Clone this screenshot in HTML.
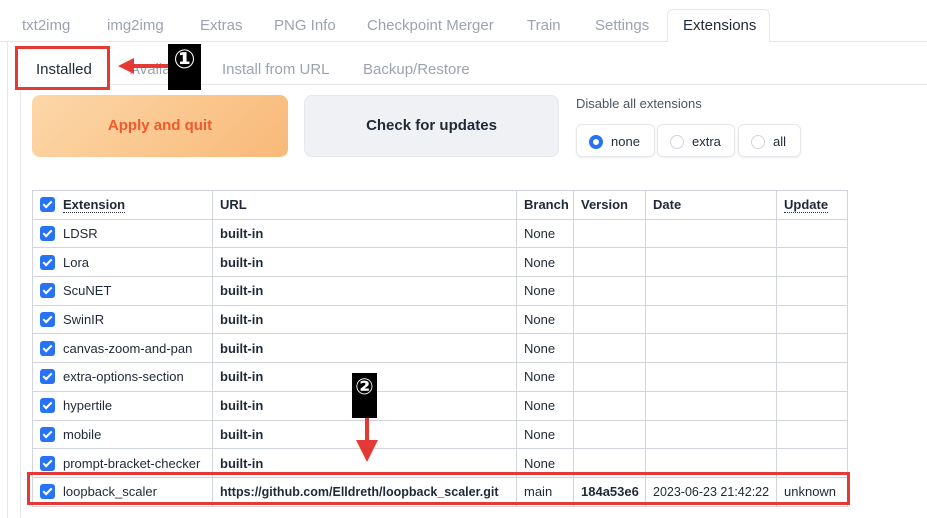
<!DOCTYPE html><html><head><style>
body{margin:0;width:927px;height:518px;background:#fff;font-family:"Liberation Sans",sans-serif;position:relative;overflow:hidden;color:#1f2937}
.a{position:absolute}
.tab{position:absolute;top:17px;font-size:15px;color:#9ca3af}
.st{position:absolute;top:61px;font-size:15px;color:#9ca3af}
table{position:absolute;left:32px;top:190px;border-collapse:collapse;font-size:13px;table-layout:fixed;width:815px}
tr{height:28.7px}
td{border:1px solid #d1d5db;padding:0 0 0 7px;box-sizing:border-box;white-space:nowrap;overflow:hidden}
.cb{display:inline-block;width:15px;height:15px;background:#2673f5;border-radius:3px;vertical-align:-3px;margin-right:8px;position:relative}
.cb:after{content:"";position:absolute;left:5px;top:2px;width:3px;height:7px;border:solid #fff;border-width:0 2px 2px 0;transform:rotate(45deg)}
b{font-weight:bold}
.u{border-bottom:1px dotted #333}
.rad{position:absolute;top:124px;height:33px;border:1px solid #e5e7eb;border-radius:6px;box-shadow:0 1px 2px rgba(0,0,0,.08);font-size:13px;line-height:33px;box-sizing:border-box}
.rc{display:inline-block;width:14px;height:14px;border:1px solid #d1d5db;border-radius:50%;vertical-align:-3px;margin:0 8px 0 12px;box-sizing:border-box}
</style></head><body>
<div class="tab" style="left:22px">txt2img</div>
<div class="tab" style="left:107px">img2img</div>
<div class="tab" style="left:200px">Extras</div>
<div class="tab" style="left:274px">PNG Info</div>
<div class="tab" style="left:367px">Checkpoint Merger</div>
<div class="tab" style="left:527px">Train</div>
<div class="tab" style="left:595px">Settings</div>
<div class="a" style="left:667px;top:9px;width:103px;height:33px;border:1px solid #e5e7eb;border-bottom:none;border-radius:6px 6px 0 0;background:#fff;box-sizing:border-box"></div>
<div class="tab" style="left:683px;color:#1f2937">Extensions</div>
<div class="a" style="left:0;top:41px;width:667px;height:1px;background:#e5e7eb"></div>
<div class="a" style="left:770px;top:41px;width:157px;height:1px;background:#e5e7eb"></div>
<div class="a" style="left:7px;top:41px;width:1px;height:477px;background:#e5e7eb"></div>
<div class="a" style="left:20px;top:84px;width:1px;height:434px;background:#e5e7eb"></div>
<div class="a" style="left:110px;top:84px;width:817px;height:1px;background:#e5e7eb"></div>
<div class="st" style="left:36px;color:#1f2937">Installed</div>
<div class="st" style="left:130px">Available</div>
<div class="st" style="left:222px">Install from URL</div>
<div class="st" style="left:363px">Backup/Restore</div>
<div class="a" style="left:15px;top:46px;width:95px;height:44px;border:3px solid #e53935;box-sizing:border-box"></div>
<div class="a" style="left:130px;top:64px;width:38px;height:4px;background:#e53935"></div>
<div class="a" style="left:118px;top:58px;width:0;height:0;border-top:8px solid transparent;border-bottom:8px solid transparent;border-right:16px solid #e53935"></div>
<div class="a" style="left:168px;top:44px;width:33px;height:46px;background:#000;color:#fff;font-size:26px;font-weight:bold;text-align:center;line-height:32px;font-family:'DejaVu Sans',sans-serif">①</div>
<div class="a" style="left:32px;top:95px;width:256px;height:62px;border-radius:8px;background:linear-gradient(135deg,#fdd7a8,#f8b978);color:#ef5a2c;font-weight:bold;font-size:15px;text-align:center;line-height:62px">Apply and quit</div>
<div class="a" style="left:304px;top:95px;width:255px;height:62px;border-radius:8px;background:#f0f1f4;border:1px solid #e5e7eb;box-sizing:border-box;font-weight:bold;font-size:15px;text-align:center;line-height:60px">Check for updates</div>
<div class="a" style="left:576px;top:96px;font-size:13px;color:#4b5563">Disable all extensions</div>
<div class="rad" style="left:576px;width:79px"><span class="rc" style="border:4px solid #2673f5"></span>none</div>
<div class="rad" style="left:657px;width:78px"><span class="rc"></span>extra</div>
<div class="rad" style="left:738px;width:63px"><span class="rc"></span>all</div>
<table>
<colgroup><col style="width:180px"><col style="width:304px"><col style="width:57px"><col style="width:72px"><col style="width:131px"><col style="width:71px"></colgroup>
<tr><td><span class="cb"></span><b class="u">Extension</b></td><td><b>URL</b></td><td><b>Branch</b></td><td><b>Version</b></td><td><b>Date</b></td><td><b class="u">Update</b></td></tr>
<tr><td><span class="cb"></span>LDSR</td><td><b>built-in</b></td><td>None</td><td></td><td></td><td></td></tr>
<tr><td><span class="cb"></span>Lora</td><td><b>built-in</b></td><td>None</td><td></td><td></td><td></td></tr>
<tr><td><span class="cb"></span>ScuNET</td><td><b>built-in</b></td><td>None</td><td></td><td></td><td></td></tr>
<tr><td><span class="cb"></span>SwinIR</td><td><b>built-in</b></td><td>None</td><td></td><td></td><td></td></tr>
<tr><td><span class="cb"></span>canvas-zoom-and-pan</td><td><b>built-in</b></td><td>None</td><td></td><td></td><td></td></tr>
<tr><td><span class="cb"></span>extra-options-section</td><td><b>built-in</b></td><td>None</td><td></td><td></td><td></td></tr>
<tr><td><span class="cb"></span>hypertile</td><td><b>built-in</b></td><td>None</td><td></td><td></td><td></td></tr>
<tr><td><span class="cb"></span>mobile</td><td><b>built-in</b></td><td>None</td><td></td><td></td><td></td></tr>
<tr><td><span class="cb"></span>prompt-bracket-checker</td><td><b>built-in</b></td><td>None</td><td></td><td></td><td></td></tr>
<tr><td><span class="cb"></span>loopback_scaler</td><td><b style="font-size:12.5px">https://github.com/Elldreth/loopback_scaler.git</b></td><td>main</td><td><b>184a53e6</b></td><td style="font-size:12.5px">2023-06-23 21:42:22</td><td>unknown</td></tr>
</table>
<div class="a" style="left:27px;top:472px;width:823px;height:33px;border:3px solid #e53935;box-sizing:border-box"></div>
<div class="a" style="left:352px;top:373px;width:25px;height:45px;background:#000;color:#fff;font-size:22px;font-weight:bold;text-align:center;line-height:30px;font-family:'DejaVu Sans',sans-serif">②</div>
<div class="a" style="left:365px;top:418px;width:4px;height:24px;background:#e53935"></div>
<div class="a" style="left:356px;top:440px;width:0;height:0;border-left:11px solid transparent;border-right:11px solid transparent;border-top:22px solid #e53935"></div>
</body></html>
